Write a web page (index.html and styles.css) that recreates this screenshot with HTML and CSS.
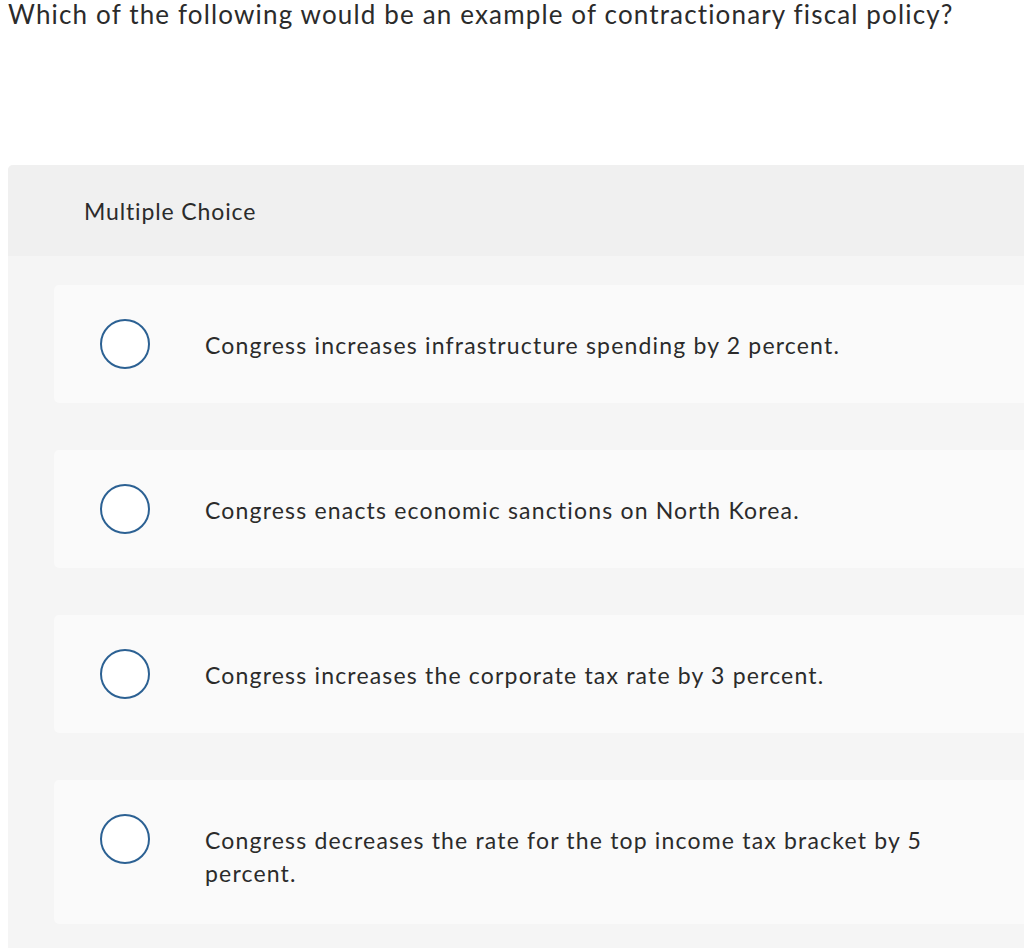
FILE: index.html
```html
<!DOCTYPE html>
<html>
<head>
<meta charset="utf-8">
<link rel="stylesheet" href="styles.css">
</head>
<body>
<h1 class="question">Which of the following would be an example of contractionary fiscal policy?</h1>
<div class="panel">
  <div class="panel-head">Multiple Choice</div>
  <div class="panel-body">
    <div class="option"><span class="radio"></span><span class="label">Congress increases infrastructure spending by 2 percent.</span></div>
    <div class="option"><span class="radio"></span><span class="label">Congress enacts economic sanctions on North Korea.</span></div>
    <div class="option"><span class="radio"></span><span class="label">Congress increases the corporate tax rate by 3 percent.</span></div>
    <div class="option"><span class="radio"></span><span class="label">Congress decreases the rate for the top income tax bracket by 5 percent.</span></div>
  </div>
</div>
</body>
</html>
```
FILE: styles.css
```css
html, body { margin: 0; padding: 0; background: #fff; overflow: hidden; }
body {
  font-family: Lato, "Liberation Sans", sans-serif;
  color: #2b2b2b;
  padding-left: 8px;
  height: 948px;
  display: flex;
  flex-direction: column;
}
.question {
  margin: 0;
  flex: none;
  font-size: 26px;
  font-weight: 400;
  line-height: 28px;
  letter-spacing: 1.15px;
  height: 165px;
  white-space: nowrap;
}
.panel {
  flex: 1;
  background: #f5f5f5;
  border-radius: 5px 0 0 0;
}
.panel-head {
  background: #f0f0f0;
  height: 91px;
  display: flex;
  align-items: center;
  padding-left: 76px;
  font-size: 23px;
  letter-spacing: 0.87px;
  border-radius: 5px 0 0 0;
}
.panel-body {
  padding: 29px 0 0 46px;
  display: flex;
  flex-direction: column;
  gap: 47px;
}
.option {
  background: #fafafa;
  border-radius: 5px 0 0 5px;
  padding: 34px 0 34px 46px;
  display: flex;
  align-items: flex-start;
}
.radio {
  flex: none;
  width: 46px;
  height: 46px;
  border: 2px solid #2c6193;
  border-radius: 50%;
  background: #fff;
}
.label {
  margin-left: 55px;
  padding-top: 10px;
  font-size: 23px;
  line-height: 33px;
  letter-spacing: 1.18px;
  width: 770px;
}
```
